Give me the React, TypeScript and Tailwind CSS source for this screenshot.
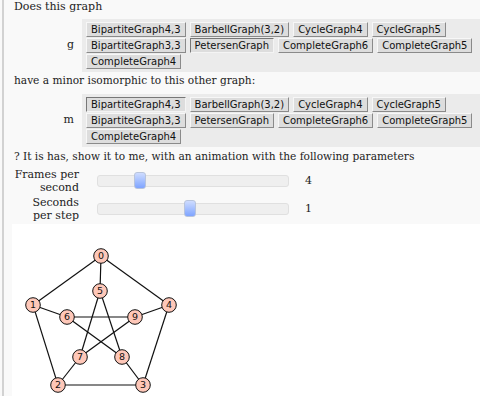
import React from "react";

const serif = "font-['DejaVu_Serif','Liberation_Serif',serif]";
const sans = "font-['DejaVu_Sans','Liberation_Sans',sans-serif]";

type Btn = { label: string; pressed?: boolean };

const GraphButton = ({ label, pressed }: Btn) => (
  <button
    className={`h-[15px] px-[4px] border ${sans} text-[10px] leading-none text-[#111] bg-[#dddddd] ${
      pressed
        ? "border-t-[#777] border-l-[#777] border-b-[#f4f4f4] border-r-[#f4f4f4]"
        : "border-t-[#f7f7f7] border-l-[#f7f7f7] border-b-[#8a8a8a] border-r-[#8a8a8a]"
    }`}
  >
    {label}
  </button>
);

const ButtonGroup = ({ name, pressed }: { name: string; pressed: string }) => {
  const rows = [
    ["BipartiteGraph4,3", "BarbellGraph(3,2)", "CycleGraph4", "CycleGraph5"],
    ["BipartiteGraph3,3", "PetersenGraph", "CompleteGraph6", "CompleteGraph5"],
    ["CompleteGraph4"],
  ];
  return (
    <div className="flex items-center">
      <div className="w-[68px] text-right pr-[8px] text-[11px]">{name}</div>
      <div className="flex-1 bg-[#ebebeb] py-[3px] pl-[4px] flex flex-col gap-[1px]">
        {rows.map((row, i) => (
          <div key={i} className="flex gap-[4px]">
            {row.map((b) => (
              <GraphButton key={b} label={b} pressed={b === pressed} />
            ))}
          </div>
        ))}
      </div>
    </div>
  );
};

const Slider = ({ label, value, pos }: { label: React.ReactNode; value: string; pos: number }) => (
  <div className="flex items-center h-[26px]">
    <div className="w-[65px] text-right leading-[13px] text-[11px]">{label}</div>
    <div className="relative ml-[18px] w-[192px] h-[12px] rounded-[3px] bg-[#efefef] border border-[#e0e0e0]">
      <div
        className="absolute top-[-4px] w-[12px] h-[17px] rounded-[3px] border border-[#b8c4dc] bg-gradient-to-b from-[#cfdcff] to-[#7fa4ff]"
        style={{ left: pos }}
      />
    </div>
    <div className="ml-[16px] text-[11px]">{value}</div>
  </div>
);

// Petersen graph, coordinates relative to the white plot area
const nodes: [number, number][] = [
  [89, 32],
  [21, 81],
  [46, 161],
  [131, 161],
  [157, 81],
  [88, 67],
  [55, 93],
  [68, 133],
  [110, 133],
  [123, 93],
];
const edges = [
  [0, 1], [1, 2], [2, 3], [3, 4], [4, 0],
  [0, 5], [1, 6], [2, 7], [3, 8], [4, 9],
  [5, 7], [5, 8], [6, 8], [6, 9], [7, 9],
];

const Petersen = () => (
  <svg width="180" height="172" viewBox="0 0 180 172">
    {edges.map(([a, b], i) => (
      <line
        key={i}
        x1={nodes[a][0]}
        y1={nodes[a][1]}
        x2={nodes[b][0]}
        y2={nodes[b][1]}
        stroke="#111"
        strokeWidth="1.2"
      />
    ))}
    {nodes.map(([x, y], i) => (
      <g key={i}>
        <circle cx={x} cy={y} r="7.3" fill="#fec7b8" stroke="#111" strokeWidth="1" />
        <text
          x={x}
          y={y + 3.3}
          textAnchor="middle"
          fontSize="9.5"
          fontFamily="DejaVu Sans, sans-serif"
          fill="#111"
        >
          {i}
        </text>
      </g>
    ))}
  </svg>
);

export default function App() {
  return (
    <div className={`w-[480px] h-[396px] overflow-hidden bg-[#f9f9f9] pl-[2px] ${serif} text-[10.6px] text-[#222]`}>
      <div className="h-full border-l-2 border-[#d2d2d2] pl-[10px] flex flex-col">
        <div className="h-[14px] leading-[14px] text-[11px]">Does this graph</div>
        <div className="mt-[5px]">
          <ButtonGroup name="g" pressed="PetersenGraph" />
        </div>
        <div className="h-[14px] leading-[14px] mt-[1px]">have a minor isomorphic to this other graph:</div>
        <div className="mt-[7px]">
          <ButtonGroup name="m" pressed="BipartiteGraph4,3" />
        </div>
        <div className="h-[14px] leading-[14px] mt-[2px]">
          ? It is has, show it to me, with an animation with the following parameters
        </div>
        <div className="mt-[5px]">
          <Slider label={<>Frames per<br />second</>} value="4" pos={36} />
        </div>
        <div className="mt-[2px]">
          <Slider label={<>Seconds<br />per step</>} value="1" pos={86} />
        </div>
        <div className="mt-[2px] -ml-[2px] flex-1 bg-white">
          <Petersen />
        </div>
      </div>
    </div>
  );
}
